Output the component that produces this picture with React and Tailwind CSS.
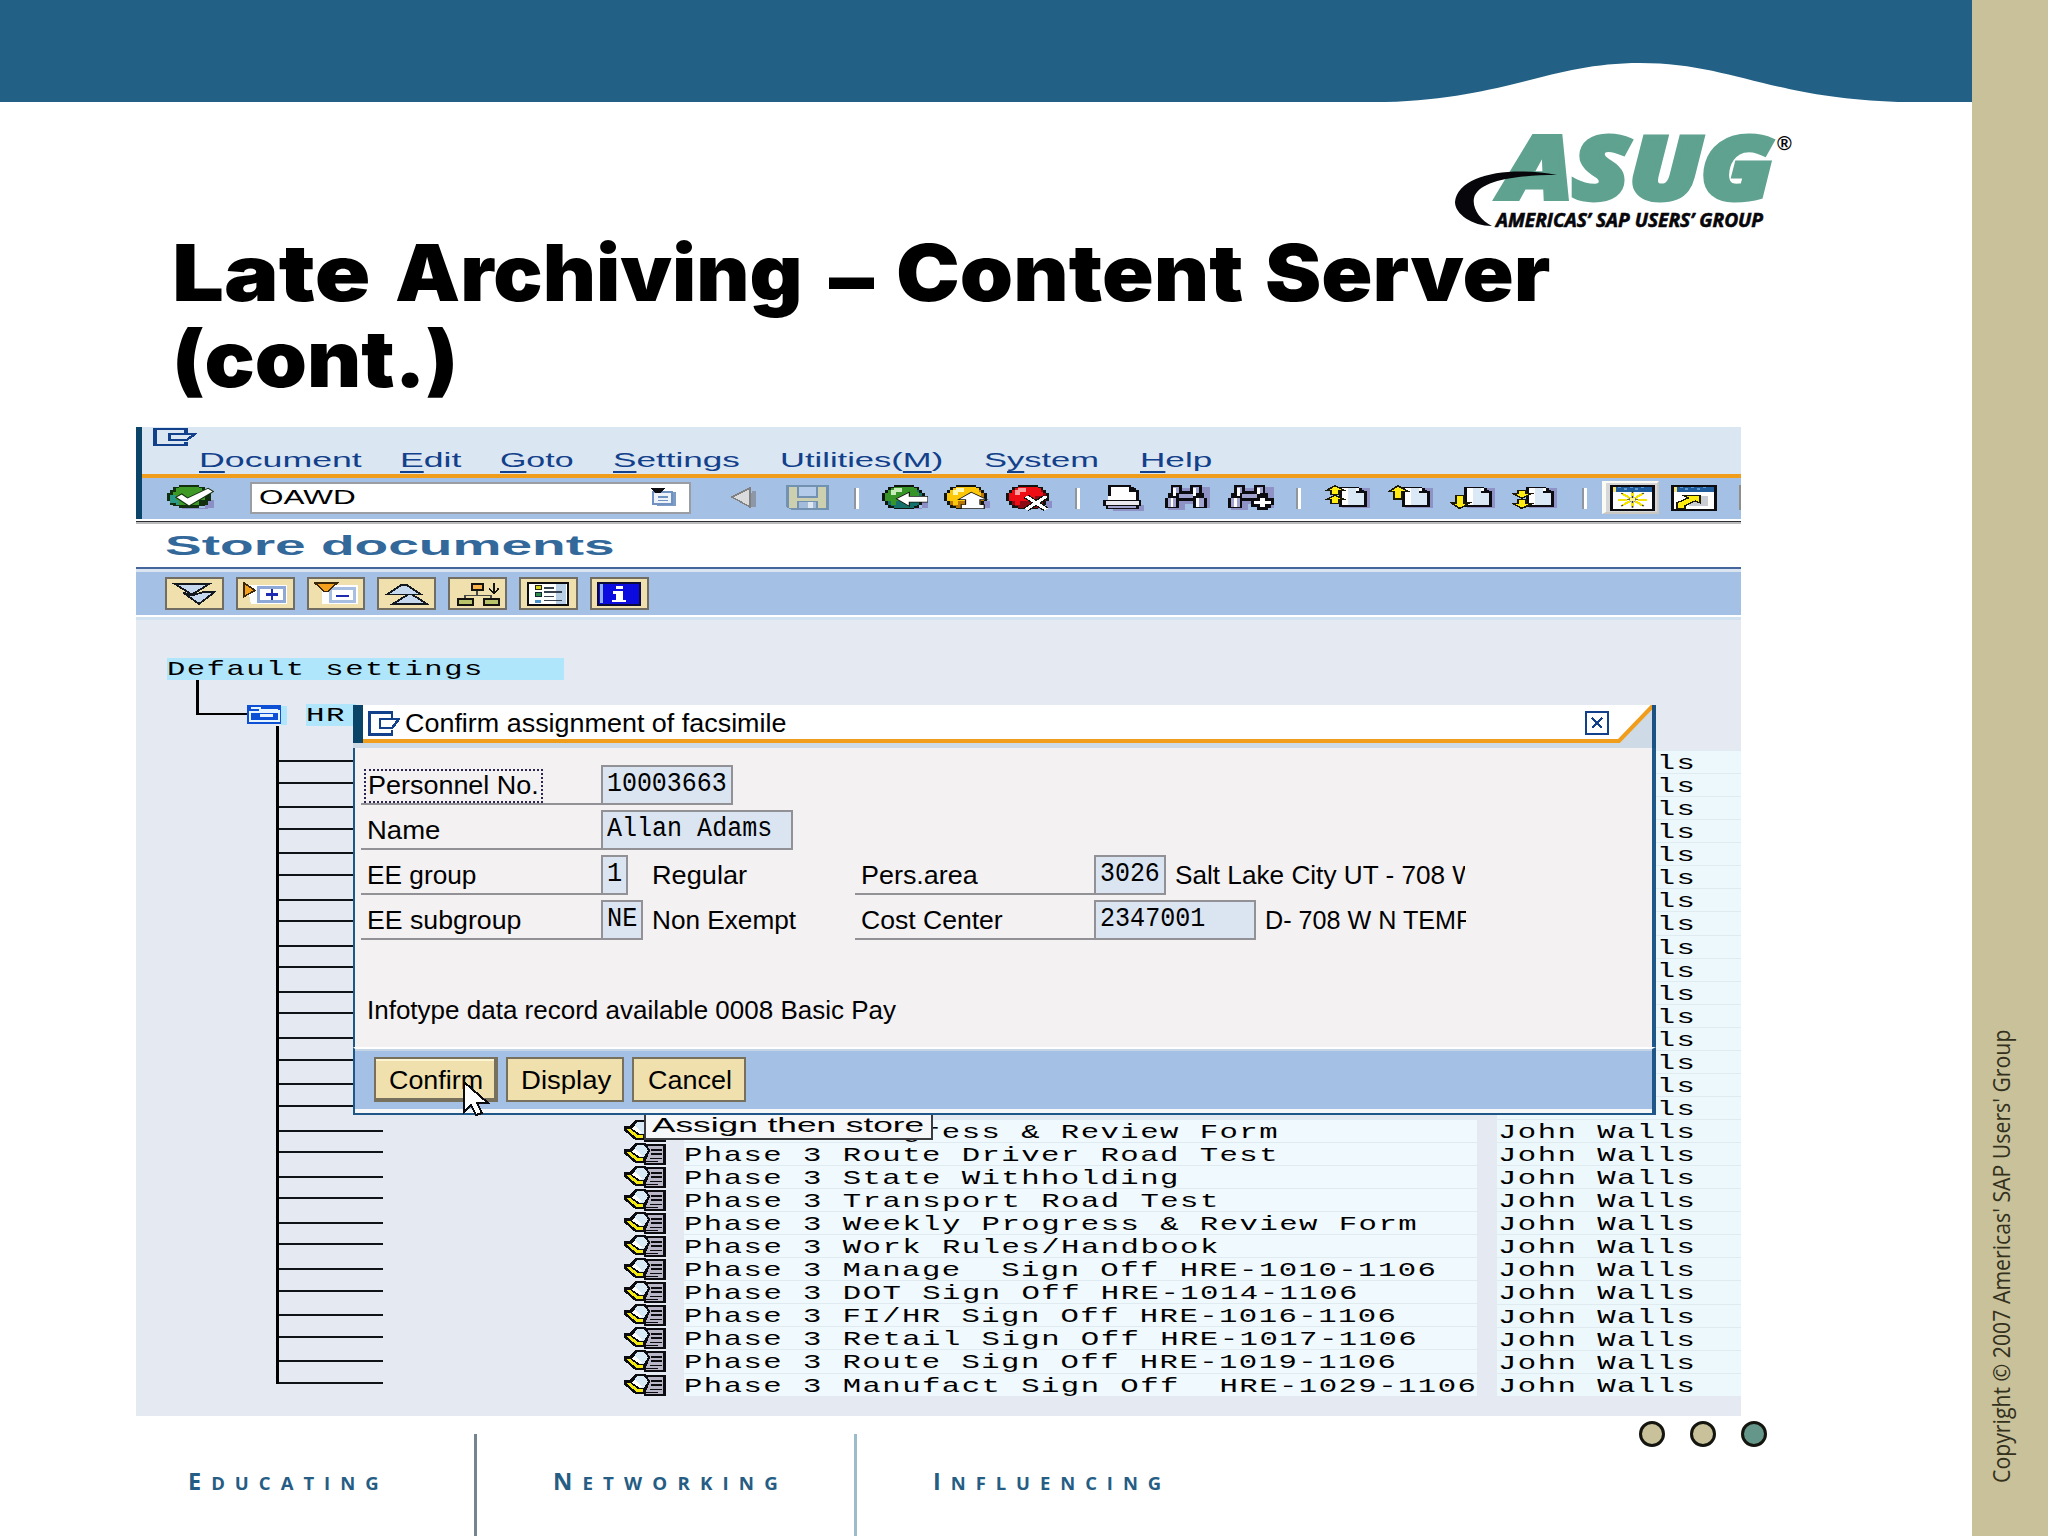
import { useLayoutEffect, useRef, useState } from 'react'
import clsx from 'clsx'

const SANS = "font-['Liberation_Sans',sans-serif]"
const MONO = "font-['Liberation_Mono',monospace]"

// One line of text, stretched or squeezed to a given width.
function Fit({ w, className, children }) {
  const ref = useRef(null)
  const [k, setK] = useState(1)
  useLayoutEffect(() => {
    setK(w / ref.current.offsetWidth)
  }, [w])
  return (
    <span className={clsx('block shrink-0', className)} style={{ width: w }}>
      <span ref={ref} className="inline-block origin-left whitespace-pre" style={{ transform: `scaleX(${k})` }}>
        {children}
      </span>
    </span>
  )
}

// List text: every character is a 19.83px cell.
function Cells({ text, className }) {
  return (
    <Fit w={text.length * 19.83} className={clsx(MONO, 'text-[21px] tracking-[1px]', className)}>
      {text}
    </Fit>
  )
}

function Icon({ className, box = '0 0 16 16', smooth, children }) {
  return (
    <svg
      viewBox={box}
      preserveAspectRatio="none"
      shapeRendering={smooth ? 'auto' : 'crispEdges'}
      className={clsx('block shrink-0', className)}
    >
      {children}
    </svg>
  )
}

/* ---------- slide frame ---------- */

function Header() {
  return (
    <svg viewBox="0 0 1972 102" className="block h-[102px] w-[1972px]">
      <path
        d="M0 0H1972V102H1898C1770 98 1730 63 1640 63C1550 63 1510 98 1385 102H0Z"
        fill="#226185"
      />
    </svg>
  )
}

function Logo() {
  return (
    <svg viewBox="0 0 350 126" className="ml-[1450px] block h-[126px] w-[350px] overflow-visible">
      <text
        x="53" y="97" fontFamily="Open Sans" fontWeight="800" fontStyle="italic" fontSize="87"
        textLength="270" lengthAdjust="spacingAndGlyphs" fill="#5ea28f" stroke="#5ea28f" strokeWidth="5"
      >
        ASUG
      </text>
      <path d="M107 73C60 64 8 72 5 100C5 112 22 124 42 124C30 118 22 106 24 96C28 80 60 73 107 73Z" fill="#07060a" />
      <text
        x="46" y="124.5" fontFamily="Open Sans" fontWeight="700" fontStyle="italic" fontSize="19"
        textLength="267" lengthAdjust="spacingAndGlyphs" fill="#07060a" stroke="#07060a" strokeWidth="0.6"
      >
        AMERICAS’ SAP USERS’ GROUP
      </text>
      <text x="327" y="48" fontFamily="Liberation Sans" fontWeight="700" fontSize="20" fill="#07060a">®</text>
    </svg>
  )
}

function Title() {
  return (
    <h1 className="mb-[25px] h-[172px] pt-[2px] font-['Inter',sans-serif] text-[78px] leading-[86px] font-black">
      <span className="flex pl-[172px]">
        <Fit w={198}>Late</Fit>
        <Fit w={408} className="ml-[25px]">Archiving</Fit>
        <Fit w={45} className="ml-[26px] translate-y-[5px]">–</Fit>
        <Fit w={347} className="ml-[22px]">Content</Fit>
        <Fit w={285} className="ml-[22px]">Server</Fit>
      </span>
      <Fit w={286} className="ml-[172px]">(cont.)</Fit>
    </h1>
  )
}

function SmallCaps({ text, w }) {
  return (
    <Fit w={w} className="font-['Open_Sans',sans-serif] text-[18.500px] leading-[28px] font-bold tracking-[10px] text-[#255d84]">
      <span className="text-[23.500px]">{text[0]}</span>
      {text.slice(1)}
    </Fit>
  )
}

function Footer() {
  return (
    <div className="flex h-[102px]">
      <div className="w-[474px] pt-[33px] pl-[188px]"><SmallCaps text="EDUCATING" w={201} /></div>
      <div className="w-[380px] border-l-[3px] border-[#74858f] pt-[33px] pl-[76px]"><SmallCaps text="NETWORKING" w={235} /></div>
      <div className="w-[380px] border-l-[3px] border-[#9dbcc9] pt-[33px] pl-[76px]"><SmallCaps text="INFLUENCING" w={238} /></div>
    </div>
  )
}

/* ---------- SAP window ---------- */

const MENU = [
  { pre: '', key: 'D', post: 'ocument', w: 163, gap: 'ml-[57px]' },
  { pre: '', key: 'E', post: 'dit', w: 62, gap: 'ml-[38px]' },
  { pre: '', key: 'G', post: 'oto', w: 73, gap: 'ml-[38px]' },
  { pre: '', key: 'S', post: 'ettings', w: 126, gap: 'ml-[40px]' },
  { pre: 'Utilities(', key: 'M', post: ')', w: 163, gap: 'ml-[41px]' },
  { pre: 'S', key: 'y', post: 'stem', w: 115, gap: 'ml-[41px]' },
  { pre: '', key: 'H', post: 'elp', w: 72, gap: 'ml-[41px]' },
]

function ExitMark({ className }) {
  return (
    <Icon className={className} box="0 0 32 24">
      <path d="M24 7V1.5H1.5V22.5H24V18" fill="none" stroke="#12408a" strokeWidth="2.4" />
      <path d="M12 7.5H31L24 16.5H12Z" fill="none" stroke="#12408a" strokeWidth="2.4" />
    </Icon>
  )
}

function MenuBar() {
  return (
    <div className="flex h-[51px] flex-col border-b-[4px] border-[#f09d1c] bg-[#dae6f2]">
      <ExitMark className="mt-px ml-[11px] h-[18px] w-[44px]" />
      <div className={clsx('flex text-[19.5px] leading-[28px] text-[#12408a]', SANS)}>
        {MENU.map((m) => (
          <Fit key={m.key} w={m.w} className={m.gap}>
            {m.pre}
            <span className="underline decoration-2 underline-offset-[4px] [text-decoration-skip-ink:none]">{m.key}</span>
            {m.post}
          </Fit>
        ))}
      </div>
    </div>
  )
}

function Ball({ dark, mid, light, children }) {
  return (
    <Icon className="h-[26px] w-[46px]">
      <path d="M6 15h8v-1h2v-4h-1v-4h-1v8h-8z" fill="#8b8fc6" />
      <path d="M4 0h7v1h2v2h1v2h1v5h-1v2h-1v2h-2v1h-7v-1h-2v-2h-1v-2h-1v-5h1v-2h1v-2h2z" fill="#10140f" />
      <path d="M4 1h7v1h1v1h1v2h1v5h-1v2h-1v1h-1v1h-7v-1h-1v-1h-1v-2h-1v-5h1v-2h1v-1h1z" fill={dark} />
      <path d="M4 1h7v1h1v2h1v3h-3v3h-5v2h-2v-2h-2v-5h1v-2h1v-1h1z" fill={mid} />
      <path d="M4 2h3v2h-2v2h-2v-3h1z" fill={light} />
      {children}
    </Icon>
  )
}

function Rule({ className }) {
  return <div className={clsx('h-[21px] w-[5px] shrink-0 border-l-2 border-[#8f969e] bg-white', className)} />
}

function Binoculars({ plus }) {
  return (
    <Icon className={plus ? 'ml-[18px] h-[25px] w-[46px]' : 'ml-[21px] h-[25px] w-[45px]'}>
      <path d="M3 1h3v1h4v-1h6v14h-6v-3h-3v4h-6v-2z" fill="#8e92c4" />
      <path d="M2 0h4v4h3v-4h4v5h1v3h1v7h-5v-5h-5v5h-5v-7h1v-3h1z" fill="#0b0b10" />
      <path d="M3 1h2v4h-2zM10 1h2v4h-2zM1 8h3v6h-3zM11 8h3v6h-3zM5 6h5v2h-5z" fill="#a3a3cf" />
      <path d="M3 2h1v5h-1zM10 2h1v5h-1zM2 8h1v6h-1zM11 8h1v6h-1z" fill="#fff" />
      {plus && (
        <>
          <path d="M10 6h4v2h2v5h-2v3h-4v-2h-2v-5h2z" fill="#0b0b10" />
          <path d="M11 8h2v2h2v2h-2v2h-2v-2h-2v-2h2z" fill="#fff" />
        </>
      )}
    </Icon>
  )
}

// Page with yellow arrow(s): first, previous, next, last.
function PageIcon({ arrows, className }) {
  return (
    <Icon className={clsx('h-[25px] w-[45px]', className)}>
      <path d="M7 2h9v13h-10z" fill="#8e92c4" />
      <path d="M5 1h7v1h1v1h1v1h1v10h-10z" fill="#0b0b10" />
      <path d="M6 2h5v3h3v8h-8z" fill="#dbe9f6" />
      <path d="M6 2h2v11h-2zM11 2h1v2h-1z" fill="#fff" />
      {arrows.map((d) => (
        <path key={d} d={d} fill="#ffec12" stroke="#1c1a05" strokeWidth="0.8" />
      ))}
    </Icon>
  )
}

const UP_TOP = 'M3.5 0.5L7 3.5H5V6H2.2V3.5H0.5Z'
const UP_LOW = 'M3.5 6.5L7 9.5H5V12H2.2V9.5H0.5Z'
const UP_LONG = 'M3.5 0.5L7 4H5V9H2.2V4H0.5Z'
const DOWN_LONG = 'M3.5 15L7 11.5H5V6.5H2.2V11.5H0.5Z'
const DOWN_TOP = 'M3.5 8.5L7 5.5H5V3.5H2.2V5.5H0.5Z'
const DOWN_LOW = 'M3.5 15L7 12H5V9.5H2.2V12H0.5Z'

function WindowIcon({ className, children }) {
  return (
    <Icon className={className}>
      <path d="M0 0h16v16h-16z" fill="#0b0b10" />
      <path d="M1 1h14v14h-14z" fill="#fff" />
      <path d="M1 1h14v3h-14z" fill="#1f5d9f" />
      <path d="M1 1h1v3h-1z" fill="#f6e27a" />
      <path d="M3 1h1v1h-1zM5 2h1v1h-1zM7 1h1v1h-1zM9 2h1v1h-1zM11 1h1v1h-1z" fill="#5e9ad0" />
      {children}
    </Icon>
  )
}

function Toolbar() {
  return (
    <div className="flex h-[41px] items-start overflow-hidden bg-[#a4c0e4] pt-[7px]">
      <Icon className="ml-[25px] h-[26px] w-[47px]">
        <path d="M5 15h9v-1h2v-5h-1v-3h-2v8h-8z" fill="#8b8fc6" />
        <path d="M4 0h7v1h2v2h1v2h1v5h-1v2h-1v1h-2v1h-7v-1h-2v-1h-1v-2h-1v-5h1v-2h1v-2h2z" fill="#12300f" />
        <path d="M4 1h7v1h1v1h1v6h-2v3h-7v-2h-2v-1h-1v-3h1v-2h1v-2h1z" fill="#3f9a25" />
        <path d="M1 6h2v3h1v3h-1v-1h-2z" fill="#2a9a86" />
        <path d="M3 7.5L5 5.500L7 8L14 2L15.800 4L7.500 13Z" fill="#fff" stroke="#12300f" strokeWidth="0.5" />
      </Icon>
      <div className="-mt-[3px] ml-[36px] flex h-[32px] w-[441px] shrink-0 justify-between border-2 border-[#9a9ea2] bg-white pr-[13px] pl-[7px]">
        <Fit w={96} className={clsx('text-[20px] leading-[27px]', SANS)}>OAWD</Fit>
        <Icon className="mt-[4px] h-[18px] w-[26px]" box="0 0 26 18">
          <path d="M5 4h21v14h-19z" fill="#7f9cc6" />
          <path d="M3 4h19v12h-19z" fill="#eef3fa" stroke="#6f92c2" strokeWidth="2" />
          <path d="M0 0h16l-6 5h-4z" fill="#0b0b10" />
          <path d="M8 8h10v1.5h-10zM8 11.5h10v1.5h-10z" fill="#6f92c2" />
        </Icon>
      </div>
      <Icon className="mt-[2px] ml-[40px] h-[22px] w-[27px]" box="0 0 27 22">
        <path d="M21 4h4v16h-8z" fill="#8d97a8" />
        <path d="M1 10L19 1V20Z" fill="#d9dbdc" stroke="#808080" strokeWidth="1.5" />
      </Icon>
      <Icon className="ml-[28px] h-[25px] w-[43px]">
        <path d="M0 0h16v16h-14l-2-2z" fill="#7391b0" />
        <path d="M1 1h3v14h-3zM12 1h3v14h-3zM4 8h8v2h-8z" fill="#cdd0ae" />
        <path d="M5 1h6v6h-6z" fill="#b4cbe9" />
        <path d="M5 11h6v4h-6z" fill="#a3bcdc" />
        <path d="M8 11h2v4h-2z" fill="#dfe8f0" />
      </Icon>
      <Rule className="mt-[3px] ml-[25px]" />
      <div className="ml-[23px] flex gap-[16px]">
        <Ball dark="#14706a" mid="#379427" light="#c8ecb8">
          <path d="M5 8.5L9.5 4.5V7H16V10.500H9.500V13Z" fill="#fff" stroke="#10140f" strokeWidth="0.4" />
        </Ball>
        <Ball dark="#b87508" mid="#fbc708" light="#fff8b0">
          <path d="M9.500 4.500L15 9H12.500V12H14V14.500H6V12H7.500V9H5Z" fill="#fff" stroke="#10140f" strokeWidth="0.4" />
        </Ball>
        <Ball dark="#8e0a12" mid="#ee0d15" light="#ff9d9d">
          <path d="M7 7L14 15M14 7L7 15" fill="none" stroke="#10140f" strokeWidth="2.600" />
          <path d="M7 7L14 15M14 7L7 15" fill="none" stroke="#fff" strokeWidth="1.500" />
        </Ball>
      </div>
      <Rule className="mt-[3px] ml-[23px]" />
      <Icon className="ml-[23px] h-[26px] w-[41px]">
        <path d="M4 12h12v4h-12z" fill="#8e92c4" />
        <path d="M2 0h9v1h1v1h1v1h1v6h1v4h-1v2h-13v-2h-1v-4h2z" fill="#0b0b10" />
        <path d="M3 1h7v3h3v5h-11v-2h1z" fill="#fff" />
        <path d="M1 10h13v2h-13z" fill="#e8e8ee" />
        <path d="M2 13h11v1h-11z" fill="#a3a3cf" />
      </Icon>
      <Binoculars />
      <Binoculars plus />
      <Rule className="mt-[3px] ml-[22px]" />
      <PageIcon arrows={[UP_TOP, UP_LOW]} className="ml-[24px]" />
      <PageIcon arrows={[UP_LONG]} className="ml-[18px]" />
      <PageIcon arrows={[DOWN_LONG]} className="ml-[17px]" />
      <PageIcon arrows={[DOWN_TOP, DOWN_LOW]} className="ml-[17px]" />
      <Rule className="mt-[3px] ml-[25px]" />
      <div className="-mt-[4px] ml-[15px] h-[33px] w-[57px] shrink-0 border-t-2 border-r-2 border-b-2 border-l-4 border-[#fbfbf4] border-r-[#c9c8c2] border-b-[#c9c8c2] bg-[#d5d7d8] pt-[2px] pl-[4px]">
        <WindowIcon className="h-[26px] w-[45px]">
          <path d="M8 4V14M3 9H13M4 5L12 13M12 5L4 13" stroke="#3b3a20" strokeWidth="0.6" />
          <path d="M8 5V7M8 11V13M3 9H6M10 9H13M4.500 5.500L7 8M11.500 5.500L9 8M4.500 12.500L7 10M11.500 12.500L9 10" stroke="#f5e400" strokeWidth="1.100" />
          <path d="M7 8h2v2h-2z" fill="#fff58a" />
        </WindowIcon>
      </div>
      <WindowIcon className="ml-[12px] h-[26px] w-[46px]">
        <path d="M8 7h5v6h-7z" fill="#c9ccd2" />
        <path d="M2 14.500V11L6 8L4.500 6.500H10V11L8.500 9.800L5 12.500V14.500Z" fill="#ffec12" stroke="#1c1a05" strokeWidth="0.700" />
      </WindowIcon>
      <div className="ml-[22px] h-[25px] w-[6px] shrink-0 bg-[#8d8f88]" />
    </div>
  )
}

const APP_ICONS = {
  expand: (
    <>
      <path d="M11 10L20 13L30 10H42L27 21Z" fill="#c5d8ee" stroke="#14181f" strokeWidth="1.800" />
      <path d="M3 2H37L20 12Z" fill="#c5d8ee" stroke="#14181f" strokeWidth="1.800" />
    </>
  ),
  open: (
    <>
      <path d="M4 3h40v18h-36z" fill="#fff" />
      <path d="M15 5h26v14h-26z" fill="#fff" stroke="#8ea9d8" strokeWidth="3" />
      <path d="M23 11h12v2h-12zM28 7h2v10h-2z" fill="#1f2bb0" />
      <path d="M1 1v13l11-6z" fill="#f5a01c" stroke="#3a2808" strokeWidth="1.500" />
    </>
  ),
  close: (
    <>
      <path d="M8 3h36v18h-36z" fill="#fff" />
      <path d="M16 6h24v13h-24z" fill="#fff" stroke="#a9bfe2" strokeWidth="3" />
      <path d="M22 12h13v2h-13z" fill="#1f2bb0" />
      <path d="M1 1h22l-9 8h-4z" fill="#f5a01c" stroke="#3a2808" strokeWidth="1.500" />
    </>
  ),
  collapse: (
    <>
      <path d="M2 12l14-9h6l14 9z" fill="#c5d8ee" stroke="#14181f" strokeWidth="1.800" />
      <path d="M8 21l15-9h4l15 9z" fill="#c5d8ee" stroke="#14181f" strokeWidth="1.800" />
    </>
  ),
  tree: (
    <>
      <path d="M21 8v5M9 17v-4h26v4" fill="none" stroke="#4b4a46" strokeWidth="1.500" />
      <path d="M16 2h11v6h-11z" fill="#f7b24a" stroke="#14130f" strokeWidth="2.200" />
      <path d="M2 16h15v6h-15zM28 16h15v6h-15z" fill="#b9c46a" stroke="#14130f" strokeWidth="2.200" />
      <path d="M38 1v9M33 6l5 5l5-5" fill="none" stroke="#14130f" strokeWidth="1.800" />
    </>
  ),
  legend: (
    <>
      <path d="M2 1h40v21h-40z" fill="#fff" stroke="#0b0b10" strokeWidth="2.500" />
      <path d="M30 2h10v19h-10z" fill="#b9cfe6" />
      <path d="M18 5h10v1.500h-10zM18 9h18v1.500h-18zM18 13h10v1.500h-10zM18 17h18v1.500h-18z" fill="#36414d" />
      <path d="M9 3h6v4h-6z" fill="#d8d41c" stroke="#26240a" strokeWidth="1" />
      <path d="M9 10h6v4h-6z" fill="#2f8f4a" stroke="#123" strokeWidth="1" />
      <path d="M9 17h6v3h-6z" fill="#4b92c8" />
    </>
  ),
  info: (
    <>
      <path d="M1 1h42v21h-42z" fill="#0b0be0" stroke="#0b0b3a" strokeWidth="2.200" />
      <path d="M3 2h3v18h-3z" fill="#8fb0ea" />
      <path d="M19 4h7v3h-7zM16 9h10v8h3v2.500h-14v-2.500h4v-5.500h-3z" fill="#fff" />
    </>
  ),
}

function AppBar() {
  return (
    <div className="flex h-[45px] gap-[12px] border-b-[2px] border-white bg-[#a4c0e4] pt-[5px] pl-[29px]">
      {Object.entries(APP_ICONS).map(([name, art]) => (
        <div
          key={name}
          className="flex h-[33px] w-[58.800px] items-center justify-center border-2 border-[#716d63] bg-[#f0e0ae]"
        >
          <Icon className="h-[24px] w-[44px]" box="0 0 44 23">{art}</Icon>
        </div>
      ))}
    </div>
  )
}

const DOCUMENTS = [
  'Phase 3 Progress & Review Form',
  'Phase 3 Route Driver Road Test',
  'Phase 3 State Withholding',
  'Phase 3 Transport Road Test',
  'Phase 3 Weekly Progress & Review Form',
  'Phase 3 Work Rules/Handbook',
  'Phase 3 Manage  Sign Off HRE-1010-1106',
  'Phase 3 DOT Sign Off HRE-1014-1106',
  'Phase 3 FI/HR Sign Off HRE-1016-1106',
  'Phase 3 Retail Sign Off HRE-1017-1106',
  'Phase 3 Route Sign Off HRE-1019-1106',
  'Phase 3 Manufact Sign Off  HRE-1029-1106',
]

function StoreIcon() {
  return (
    <Icon className="mt-px mr-[17px] h-[22px] w-[43px]" box="0 0 43 21">
      <path d="M20 1h22v20h-22z" fill="#0b0b10" />
      <path d="M22 3h17v16h-17z" fill="#b9b6c8" />
      <path d="M27 6h11v1.500h-11zM27 10h11v1.500h-11zM26 14h12v1.500h-12zM22 17h12v1.500h-12z" fill="#0b0b10" />
      <path d="M11 0h11l4 7l-5 12h-10L0 10V6h5z" fill="#0b0b10" />
      <path d="M3 9l3-1l7 6h6v3h-7z" fill="#f4ea10" />
      <path d="M13 2h7l4 5l-4 6h-5l-6-5z" fill="#d8eaf6" />
      <path d="M8 8l3-3l7 7l-3 1z" fill="#fff" />
    </Icon>
  )
}

function Tree() {
  return (
    <div className="h-[799px] border-t-[3px] border-[#d3e2f1] bg-[#e5e9f1] pt-[38px]">
      <div className="ml-[31px] h-[22px] w-[397px] bg-[#b0e6fb]">
        <Cells text="Default settings" className="leading-[23px]" />
      </div>
      <div className="flex h-[46px]">
        <div className="ml-[60px] h-[35px] w-[51px] border-b-2 border-l-[3px] border-black" />
        <Icon className="mt-[25px] h-[20px] w-[40px]" box="0 0 40 20">
          <path d="M34 1h6v19h-6z" fill="#b0e6fb" />
          <path d="M0 0h34v19h-34z" fill="#0d50d6" />
          <path d="M4 3h9v2h17v2h-27v9h29v-11" fill="none" stroke="#e6f4ff" strokeWidth="1.500" />
          <path d="M13 9h13v2.500h-13z" fill="#e6f4ff" />
        </Icon>
        <div className="mt-[24px] ml-[19px] h-[22px] w-[50px] bg-[#b0e6fb]">
          <Cells text="HR" className="leading-[24px]" />
        </div>
      </div>

      <div className="flex">
        {/* trunk and its branches */}
        <div className="ml-[140px] h-[658px] w-[107px] shrink-0 border-l-[3px] border-black pt-[34px]">
          {Array.from({ length: 14 }, (_, i) => (
            <div key={i} className="h-[46.200px]">
              <div className="h-[21.500px] border-t-2 border-[#101418]" />
              <div className="border-t-2 border-[#101418]" />
            </div>
          ))}
        </div>
        <div className="mt-[392.500px] ml-[241px]">
          {DOCUMENTS.map((d) => (
            <div key={d} className="flex h-[23.100px]">
              <StoreIcon />
              <div className="w-[793px] border-t border-[#e0ebf1] bg-[#f0f9fd]">
                <Cells text={d} className="leading-[26px]" />
              </div>
            </div>
          ))}
        </div>
        <div className="mt-[24px] ml-[20px] w-[244px]">
          {Array.from({ length: 28 }, (_, i) => (
            <div key={i} className="h-[23.070px] border-t border-[#e0ebf1] bg-[#edf8fc] pl-px">
              <Cells text="John Walls" className="leading-[26px]" />
            </div>
          ))}
        </div>
      </div>
    </div>
  )
}

/* ---------- dialog ---------- */

function Label({ children, w, className, focus }) {
  return (
    <div className={clsx('h-[40px] shrink-0 border-b-2 border-[#929296]', className)}>
      <div className={clsx(focus && 'mt-[4px] ml-[3px] h-[34px] w-[179px] border-2 border-dotted border-[#2c2550]')}>
        <Fit w={w} className={clsx('leading-[40px]', focus ? '-mt-[6px] ml-[2px]' : 'ml-[6px]')}>{children}</Fit>
      </div>
    </div>
  )
}

function Field({ value, className }) {
  return (
    <div className={clsx('h-[40px] shrink-0 border-2 border-[#929296] bg-[#dbe5f1] pl-[4px]', className)}>
      <Fit w={value.length * 15} className={clsx('text-[27px] leading-[35px]', MONO)}>{value}</Fit>
    </div>
  )
}

function DialogButton({ children, w, className }) {
  return (
    <div className={clsx('h-[45px] border-2 border-[#77705c] bg-[#f0e0ae] leading-[46px]', className)}>
      <Fit w={w} className="-mt-[2px]">{children}</Fit>
    </div>
  )
}

function Dialog() {
  return (
    <div className={clsx('absolute top-[278px] left-[217px] flex h-[410px] w-[1303px] flex-col text-[26px]', SANS)}>
      <div className="relative flex h-[43px] bg-[#cedbe7]">
        <div className="h-[38px] w-[10px] bg-[#0a4468]" />
        <div className="flex h-[38px] w-[1254px] border-b-[4px] border-[#f09d1c] bg-white">
          <ExitMark className="mt-[6px] ml-[5px] h-[25px] w-[32px]" />
          <Fit w={381} className="ml-[5px] leading-[37px]">Confirm assignment of facsimile</Fit>
          <Icon className="mt-[6px] ml-[799px] h-[24px] w-[24px]" box="0 0 24 24">
            <path d="M1 1h22v22h-22z" fill="#fff" stroke="#12408a" strokeWidth="2" />
            <path d="M7 7L17 17M17 7L7 17" stroke="#12408a" strokeWidth="2" />
          </Icon>
        </div>
        {/* cut corner at the end of the title bar */}
        <Icon className="h-[43px] w-[39px]" box="0 0 39 43" smooth>
          <path d="M0 0H39L36 3L2 34H0Z" fill="#fff" />
          <path d="M0 36H2L36.500 0" fill="none" stroke="#f09d1c" strokeWidth="4" />
          <path d="M35 0h4v43h-4z" fill="#1b5283" />
        </Icon>
      </div>

      <div className="h-[299px] border-r-4 border-l-2 border-[#1f5788] bg-[#f3f1f2] pt-[17px] pl-[6px]">
        <div className="flex h-[45px]">
          <Label className="w-[240px]" w={171} focus>Personnel No.</Label>
          <Field value="10003663" className="w-[132px]" />
        </div>
        <div className="flex h-[45px]">
          <Label className="w-[240px]" w={73}>Name</Label>
          <Field value="Allan Adams" className="w-[192px]" />
        </div>
        <div className="flex h-[45px]">
          <Label className="w-[240px]" w={109}>EE group</Label>
          <Field value="1" className="w-[27px]" />
          <Fit w={95} className="ml-[24px] leading-[40px]">Regular</Fit>
          <Label className="ml-[108px] w-[239px]" w={117}>Pers.area</Label>
          <Field value="3026" className="w-[72px]" />
          <div className="ml-[9px] w-[290px] overflow-hidden">
            <Fit w={302} className="leading-[40px]">Salt Lake City UT - 708 W</Fit>
          </div>
        </div>
        <div className="flex h-[45px]">
          <Label className="w-[240px]" w={154}>EE subgroup</Label>
          <Field value="NE" className="w-[42px]" />
          <Fit w={144} className="ml-[9px] leading-[40px]">Non Exempt</Fit>
          <Label className="ml-[59px] w-[239px]" w={142}>Cost Center</Label>
          <Field value="2347001" className="w-[162px]" />
          <div className="ml-[9px] w-[201px] overflow-hidden">
            <Fit w={208} className="leading-[40px]">D- 708 W N TEMP</Fit>
          </div>
        </div>
        <Fit w={529} className="mt-[45px] ml-[6px] leading-[40px]">Infotype data record available 0008 Basic Pay</Fit>
      </div>

      <div className="flex h-[68px] gap-[8px] border-x-2 border-t-2 border-b-2 border-r-4 border-[#1f5788] border-t-white bg-[#a4c0e4] pt-[8px] pl-[19px] shadow-[inset_0_-4px_0_#f6f7f9,inset_0_2px_0_#c4d6e6]">
        <DialogButton className="w-[124px] border-r-4 border-b-4 pl-[13px] shadow-[inset_0_2px_0_#fdf5d2]" w={94}>Confirm</DialogButton>
        <DialogButton className="w-[118px] pl-[13px]" w={90}>Display</DialogButton>
        <DialogButton className="w-[114px] pl-[14px]" w={84}>Cancel</DialogButton>
      </div>

      {/* mouse pointer */}
      <Icon className="absolute top-[376px] left-[110px] h-[35px] w-[27px]" box="0 0 27 35">
        <path d="M1 1V31L8 24L13 34L19 32L14 22H25Z" fill="#fff" stroke="#0b0b10" strokeWidth="2" />
      </Icon>
    </div>
  )
}

function SapWindow() {
  return (
    <div className="relative ml-[136px] flex h-[989px] w-[1605px] flex-col overflow-hidden bg-white">
      <div className="border-l-[6px] border-[#0a4468]">
        <MenuBar />
        <Toolbar />
      </div>
      <div className="h-[5px] shrink-0 border-t-2 border-b-2 border-t-white border-b-[#bcbcbc] bg-[#2b3036]" />
      <div className="h-[45px] shrink-0 border-b-2 border-[#44669c] pl-[29px]">
        <Fit w={450} className={clsx('text-[28.500px] leading-[42px] font-bold text-[#33689a]', SANS)}>Store documents</Fit>
      </div>
      <div className="h-[3px] shrink-0 bg-[#dbe5f1]" />
      <AppBar />
      <Tree />
      <div className="absolute top-[684px] left-[508px] h-[29px] w-[289px] border-2 border-[#3a3c40] bg-[#f6f7f9] pl-[6px]">
        <Fit w={273} className={clsx('text-[20px] leading-[25px]', SANS)}>Assign then store</Fit>
      </div>
      <Dialog />
    </div>
  )
}

export default function App() {
  return (
    <div className="flex h-[1536px] w-[2048px] overflow-hidden bg-white text-black">
      <div className="w-[1972px]">
        <Header />
        <Logo />
        <Title />
        <div className="mt-[27px]">
          <SapWindow />
        </div>
        <div className="-mb-[8px] flex h-[26px] gap-[25px] pt-[5px] pl-[1639px]">
          <div className="h-[26px] w-[26px] rounded-full border-[3px] border-[#15150f] bg-[#c8c199]" />
          <div className="h-[26px] w-[26px] rounded-full border-[3px] border-[#15150f] bg-[#c8c199]" />
          <div className="h-[26px] w-[26px] rounded-full border-[3px] border-[#15150f] bg-[#64978a]" />
        </div>
        <Footer />
      </div>
      <aside className="flex w-[76px] items-end bg-[#c8c199]">
        <div className="mb-[53px] ml-[14px] h-[453px] w-[30px]">
          <div className="w-[453px] origin-top-left translate-y-[453px] -rotate-90">
            <Fit w={453} className="font-['Open_Sans',sans-serif] text-[23px] leading-[30px] text-[#33301c]">
              Copyright © 2007 Americas' SAP Users' Group
            </Fit>
          </div>
        </div>
      </aside>
    </div>
  )
}
